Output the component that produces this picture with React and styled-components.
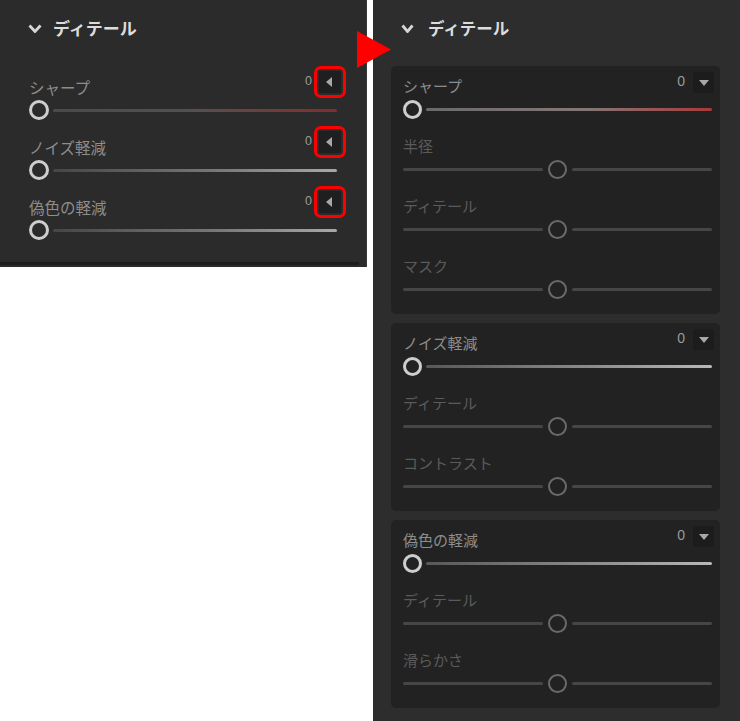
import React from "react";
import styled, { createGlobalStyle, css } from "styled-components";

const GlobalStyle = createGlobalStyle`
  html, body { margin: 0; padding: 0; background: #ffffff; }
  body { font-family: "Noto Sans CJK JP", "Noto Sans", sans-serif; }
  * { box-sizing: border-box; }
`;

const Page = styled.div`
  position: relative;
  width: 740px;
  height: 721px;
  display: flex;
  align-items: flex-start;
  gap: 6px;
  overflow: hidden;
`;

const LeftPanel = styled.section`
  width: 367px;
  height: 267px;
  background: #2b2b2b;
  border-right: 1px solid #3b3b3b;
  display: flex;
  flex-direction: column;
`;

const RightPanel = styled.section`
  flex: 1;
  height: 721px;
  background: #2d2d2d;
  display: flex;
  flex-direction: column;
`;

const Header = styled.div`
  height: 56px;
  flex: none;
  display: flex;
  align-items: center;
  gap: ${(p) => (p.$compact ? "14px" : "11px")};
  padding-left: ${(p) => (p.$compact ? "28px" : "28px")};
  color: #dcdcdc;
  font-weight: 700;
  font-size: ${(p) => (p.$compact ? "16.5px" : "17px")};
  line-height: 20px;
`;

const RowList = styled.div`
  display: flex;
  flex-direction: column;
  gap: 17px;
  padding: 21px 25px 0 29px;
`;

const Separator = styled.div`
  margin-top: auto;
  margin-bottom: 2px;
  margin-right: 7px;
  height: 3px;
  background: #1e1e1e;
`;

const CardList = styled.div`
  display: flex;
  flex-direction: column;
  gap: 9px;
  padding: 10px 20px 0 18px;
`;

const Card = styled.div`
  background: #222222;
  border-radius: 5px;
  padding: 10px 6px 15px 12px;
  display: flex;
  flex-direction: column;
  gap: 17px;
`;

const Row = styled.div`
  display: flex;
  flex-direction: column;
  gap: 3px;
`;

const TopLine = styled.div`
  height: 20px;
  display: flex;
  justify-content: space-between;
  align-items: flex-start;
`;

const Label = styled.span`
  font-size: ${(p) => (p.$compact ? "15px" : "15.5px")};
  line-height: 20px;
  color: ${(p) => (p.$dim ? "#5b5b5b" : "#8d8d8d")};
  white-space: nowrap;
`;

const Controls = styled.div`
  display: flex;
  align-items: flex-start;
  gap: ${(p) => (p.$compact ? "8px" : "7px")};
  margin-top: ${(p) => (p.$compact ? "-4px" : "-6px")};
`;

const Value = styled.span`
  font-family: "Liberation Sans", "Noto Sans", sans-serif;
  font-size: ${(p) => (p.$compact ? "14px" : "12.5px")};
  line-height: ${(p) => (p.$compact ? "18px" : "20px")};
  color: #9a9a9a;
`;

const MenuButton = styled.button`
  width: ${(p) => (p.$compact ? "21px" : "22px")};
  height: ${(p) => (p.$compact ? "21px" : "22px")};
  padding: 0;
  border: none;
  border-radius: ${(p) => (p.$compact ? "3px" : "2px")};
  background: ${(p) => (p.$compact ? "#1c1c1c" : "#1f1f1f")};
  display: flex;
  align-items: center;
  justify-content: center;
  ${(p) =>
    p.$marked &&
    css`
      outline: 3px solid #ff0000;
      outline-offset: 2px;
    `}
`;

const Caret = styled.span`
  width: 0;
  height: 0;
  ${(p) =>
    p.$dir === "down"
      ? css`
          border-left: 5px solid transparent;
          border-right: 5px solid transparent;
          border-top: 6px solid #a8a8a8;
        `
      : css`
          margin-right: 2px;
          border-top: 5px solid transparent;
          border-bottom: 5px solid transparent;
          border-right: 6px solid #a8a8a8;
        `}
`;

const SliderLine = styled.div`
  height: 20px;
  display: flex;
  align-items: center;
  margin-right: ${(p) => (p.$compact ? "2px" : "4px")};
`;

const Knob = styled.span`
  flex: none;
  width: ${(p) => (p.$dim ? "19px" : p.$compact ? "19px" : "20px")};
  height: ${(p) => (p.$dim ? "19px" : p.$compact ? "19px" : "20px")};
  border-radius: 50%;
  border: ${(p) => (p.$dim ? "2.5px solid #6a6a6a" : "3px solid #cecece")};
  background: transparent;
`;

const Track = styled.span`
  flex: 1;
  height: 3px;
  border-radius: 2px;
  background: ${(p) => p.$bg};
  margin-left: ${(p) => p.$ml || 0}px;
  margin-right: ${(p) => p.$mr || 0}px;
`;

const Annotation = styled.svg`
  position: absolute;
  left: 357px;
  top: 31px;
`;

const Chevron = ({ w, h }) => (
  <svg width={w} height={h} viewBox={`0 0 ${w} ${h}`}>
    <polyline
      points={`1.5,1.5 ${w / 2},${h - 1.5} ${w - 1.5},1.5`}
      fill="none"
      stroke="#d6d6d6"
      strokeWidth="2.8"
      strokeLinejoin="miter"
    />
  </svg>
);

const DIM_TRACK = "#464646";

const Slider = ({ dim, compact, fill }) =>
  dim ? (
    <SliderLine $compact={compact}>
      <Track $bg={DIM_TRACK} $mr={5} />
      <Knob $dim />
      <Track $bg={DIM_TRACK} $ml={5} />
    </SliderLine>
  ) : (
    <SliderLine $compact={compact}>
      <Knob $compact={compact} />
      <Track $bg={fill} $ml={4} />
    </SliderLine>
  );

const SliderRow = ({ label, dim, compact, fill, value, caret, marked }) => (
  <Row>
    <TopLine>
      <Label $dim={dim} $compact={compact}>
        {label}
      </Label>
      {value !== undefined && (
        <Controls $compact={compact}>
          <Value $compact={compact}>{value}</Value>
          <MenuButton $compact={compact} $marked={marked} aria-label="menu">
            <Caret $dir={caret} />
          </MenuButton>
        </Controls>
      )}
    </TopLine>
    <Slider dim={dim} compact={compact} fill={fill} />
  </Row>
);

const LEFT_FILLS = {
  sharp: "linear-gradient(90deg, #4a4a4a 0%, #555050 50%, #862c2c 100%)",
  gray: "linear-gradient(90deg, #464646 0%, #7a7a7a 60%, #a8a8a8 100%)",
};

const RIGHT_FILLS = {
  sharp: "linear-gradient(90deg, #6a6a6a 0%, #847878 55%, #a83a3a 100%)",
  gray: "linear-gradient(90deg, #585858 0%, #8e8e8e 60%, #b8b8b8 100%)",
};

const groups = [
  { title: "シャープ", fill: "sharp", subs: ["半径", "ディテール", "マスク"] },
  { title: "ノイズ軽減", fill: "gray", subs: ["ディテール", "コントラスト"] },
  { title: "偽色の軽減", fill: "gray", subs: ["ディテール", "滑らかさ"] },
];

export default function App() {
  return (
    <>
      <GlobalStyle />
      <Page>
        <LeftPanel>
          <Header>
            <Chevron w={14} h={9} />
            <span>ディテール</span>
          </Header>
          <RowList>
            {groups.map((g) => (
              <SliderRow
                key={g.title}
                label={g.title}
                value="0"
                caret="left"
                marked
                fill={LEFT_FILLS[g.fill]}
              />
            ))}
          </RowList>
          <Separator />
        </LeftPanel>

        <RightPanel>
          <Header $compact>
            <Chevron w={13} h={9} />
            <span>ディテール</span>
          </Header>
          <CardList>
            {groups.map((g) => (
              <Card key={g.title}>
                <SliderRow
                  label={g.title}
                  value="0"
                  caret="down"
                  compact
                  fill={RIGHT_FILLS[g.fill]}
                />
                {g.subs.map((s) => (
                  <SliderRow key={s} label={s} dim compact />
                ))}
              </Card>
            ))}
          </CardList>
        </RightPanel>

        <Annotation width="34" height="37" viewBox="0 0 34 37">
          <polygon points="0,0 34,18.5 0,37" fill="#ff0000" />
        </Annotation>
      </Page>
    </>
  );
}
